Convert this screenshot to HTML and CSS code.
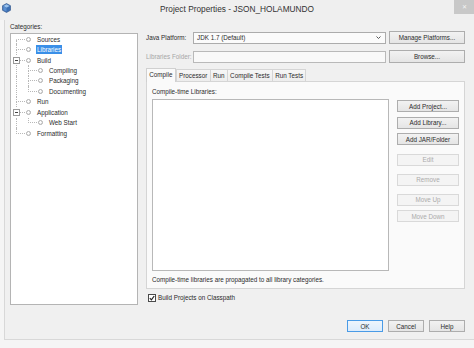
FILE: index.html
```html
<!DOCTYPE html>
<html lang="en">
<head>
    <meta charset="UTF-8">
    <meta name="viewport" content="width=device-width, initial-scale=1.0">
    <title>Project Properties</title>
    <link rel="stylesheet" href="styles.css">
</head>
<body>
<div class="window">
    <header class="titlebar">
        <svg class="app-icon" width="9" height="10" viewBox="0 0 9 10">
            <path d="M4.5 0.5 L8.5 2.7 L8.5 7.3 L4.5 9.5 L0.5 7.3 L0.5 2.7 Z" fill="#3c6fb3" stroke="#2a4f86" stroke-width="0.6"/>
            <path d="M4.5 1.3 L7.6 3 L4.5 4.8 L1.4 3 Z" fill="#9cc3ec"/>
            <path d="M4.5 4.8 L4.5 8.6 L1.4 6.9 L1.4 3 Z" fill="#5b8fd0"/>
        </svg>
        <span class="title">Project Properties - JSON_HOLAMUNDO</span>
        <span class="close">&#x2715;</span>
    </header>

    <div class="client">
        <div class="main">
            <aside class="categories">
                <div class="caption">Categories:</div>
                <div class="tree">
                    <div class="node">
                        <span class="twig first"><i></i><i></i></span>
                        <span class="dot"></span>
                        <span class="name">Sources</span>
                    </div>
                    <div class="node">
                        <span class="twig"><i></i><i></i></span>
                        <span class="dot"></span>
                        <span class="name selected">Libraries</span>
                    </div>
                    <div class="node">
                        <span class="toggle"></span><span class="stub"></span>
                        <span class="dot"></span>
                        <span class="name">Build</span>
                    </div>
                    <div class="node">
                        <span class="pass"></span>
                        <span class="twig"><i></i><i></i></span>
                        <span class="dot"></span>
                        <span class="name">Compiling</span>
                    </div>
                    <div class="node">
                        <span class="pass"></span>
                        <span class="twig"><i></i><i></i></span>
                        <span class="dot"></span>
                        <span class="name">Packaging</span>
                    </div>
                    <div class="node">
                        <span class="pass"></span>
                        <span class="twig last"><i></i><i></i></span>
                        <span class="dot"></span>
                        <span class="name">Documenting</span>
                    </div>
                    <div class="node">
                        <span class="twig"><i></i><i></i></span>
                        <span class="dot"></span>
                        <span class="name">Run</span>
                    </div>
                    <div class="node">
                        <span class="toggle"></span><span class="stub"></span>
                        <span class="dot"></span>
                        <span class="name">Application</span>
                    </div>
                    <div class="node">
                        <span class="pass"></span>
                        <span class="twig last"><i></i><i></i></span>
                        <span class="dot"></span>
                        <span class="name">Web Start</span>
                    </div>
                    <div class="node">
                        <span class="twig last"><i></i><i></i></span>
                        <span class="dot"></span>
                        <span class="name">Formatting</span>
                    </div>
                </div>
            </aside>

            <section class="settings">
                <div class="field-row">
                    <span class="field-label">Java Platform:</span>
                    <div class="combo">
                        <span>JDK 1.7 (Default)</span>
                        <svg width="5" height="3" viewBox="0 0 5 3"><path d="M0.5 0.5 L2.5 2.5 L4.5 0.5" fill="none" stroke="#444" stroke-width="0.9"/></svg>
                    </div>
                    <button class="btn wide">Manage Platforms...</button>
                </div>
                <div class="field-row">
                    <span class="field-label off">Libraries Folder:</span>
                    <div class="textbox"></div>
                    <button class="btn wide">Browse...</button>
                </div>

                <div class="tabs">
                    <span class="tab active">Compile</span>
                    <span class="tab">Processor</span>
                    <span class="tab">Run</span>
                    <span class="tab">Compile Tests</span>
                    <span class="tab">Run Tests</span>
                </div>
                <div class="tab-panel">
                    <div class="panel-label">Compile-time Libraries:</div>
                    <div class="list-area">
                        <div class="listbox"></div>
                        <div class="side-buttons">
                            <button class="btn">Add Project...</button>
                            <button class="btn">Add Library...</button>
                            <button class="btn">Add JAR/Folder</button>
                            <button class="btn gap first-off" disabled>Edit</button>
                            <button class="btn gap" disabled>Remove</button>
                            <button class="btn" disabled>Move Up</button>
                            <button class="btn" disabled>Move Down</button>
                        </div>
                    </div>
                    <div class="note">Compile-time libraries are propagated to all library categories.</div>
                </div>

                <label class="check">
                    <span class="box">
                        <svg width="6" height="6" viewBox="0 0 6 6"><path d="M0.8 3.2 L2.4 4.8 L5.2 1" fill="none" stroke="#222" stroke-width="1.2"/></svg>
                    </span>
                    Build Projects on Classpath
                </label>
            </section>
        </div>

        <footer class="actions">
            <button class="btn small default">OK</button>
            <button class="btn small">Cancel</button>
            <button class="btn small">Help</button>
        </footer>
    </div>
</div>
</body>
</html>
```

FILE: styles.css
```css
* {
    box-sizing: border-box;
}
body {
    margin: 0;
    width: 474px;
    height: 348px;
    overflow: hidden;
    background-color: #f5f5f5; /* window frame */
    font-family: "Liberation Sans", Arial, sans-serif;
    font-size: 6.3px;
    color: #2b2b2b;
}
.window {
    display: flex;
    flex-direction: column;
    height: 348px;
}

/* title bar */
.titlebar {
    height: 20px;
    display: grid;
    grid-template-columns: 20px 1fr 20px;
    align-items: start;
    background-color: #efefef;
}
.app-icon {
    margin: 3px 0 0 2px;
}
.title {
    text-align: center;
    font-size: 8.3px;
    line-height: 18px;
    color: #333;
}
.close {
    height: 14px;
    background-color: #c8c8c8;
    color: #f4f4f4;
    font-size: 6px;
    line-height: 14px;
    text-align: center;
}

/* client area */
.client {
    margin-left: 4px;
    border-left: 1px solid #d8d8d8;
    border-bottom: 1px solid #d8d8d8;
    background-color: #f0f0f0;
    height: 320px;
    display: flex;
    flex-direction: column;
}
.main {
    display: flex;
    gap: 8px;
    height: 285px;
    padding: 2px 9px 0 5px;
}

/* categories tree */
.categories {
    width: 128px;
    display: flex;
    flex-direction: column;
}
.caption {
    line-height: 10px;
    margin-bottom: 1px;
}
.tree {
    height: 272px;
    background-color: #fff;
    border: 1px solid #b4b4b4;
}
.node {
    display: flex;
    align-items: center;
    height: 10.45px;
}
.twig {
    display: flex;
    flex-direction: column;
    align-self: stretch;
    width: 9px;
    margin-left: 5px;
}
.twig i {
    flex: 1;
    border-left: 1px dotted #b8b8b8;
}
.twig i:first-child {
    border-bottom: 1px dotted #b8b8b8;
}
.twig.first i:first-child,
.twig.last i:last-child {
    border-left-color: transparent;
}
.pass {
    align-self: stretch;
    width: 7px;
    margin-left: 5px;
    border-left: 1px dotted #b8b8b8;
}
.toggle {
    width: 7px;
    height: 7px;
    margin-left: 2px;
    border: 1px solid #9a9a9a;
    background-color: #fff;
    display: flex;
    align-items: center;
    justify-content: center;
}
.toggle::before {
    content: "";
    width: 3px;
    height: 1px;
    background-color: #444;
}
.stub {
    width: 5px;
    border-top: 1px dotted #b8b8b8;
}
.dot {
    width: 5px;
    height: 5px;
    margin-left: 1px;
    border-radius: 50%;
    border: 1px solid #adadad;
    background: radial-gradient(circle at 40% 40%, #fff 30%, #dadada 100%);
}
.name {
    margin-left: 6px;
    line-height: 9px;
    white-space: nowrap;
}
.name.selected {
    margin-left: 5px;
    padding: 0 1px;
    background-color: #3a8fe8;
    color: #fff;
}

/* settings column */
.settings {
    flex: 1;
    display: flex;
    flex-direction: column;
    padding-top: 9px;
}
.field-row {
    display: flex;
    align-items: center;
    height: 13px;
    margin-bottom: 6px;
}
.field-label {
    width: 47px;
    white-space: nowrap;
}
.field-label.off {
    color: #a6a6a6;
}
.combo, .textbox {
    width: 193px;
    height: 12px;
    margin-right: 3px;
    border: 1px solid #b9b9b9;
    background-color: #f9f9f9;
}
.combo {
    display: flex;
    align-items: center;
    justify-content: space-between;
    padding: 0 4px 0 3px;
    background-color: #fbfbfb;
    border-color: #acacac;
}
.btn {
    font-family: inherit;
    font-size: 6.3px;
    color: #2b2b2b;
    height: 12px;
    padding: 0;
    border: 1px solid #adadad;
    background: linear-gradient(#f2f2f2, #e5e5e5);
    white-space: nowrap;
}
.btn:disabled {
    color: #ababab;
    border-color: #d9d9d9;
    background: #f4f4f4;
}
.btn.wide {
    width: 76px;
    height: 13px;
}

/* tabs */
.tabs {
    display: flex;
    align-items: flex-end;
    height: 13px;
    margin-top: -1px;
    position: relative;
    z-index: 1;
}
.tab {
    height: 12px;
    line-height: 11px;
    padding: 0 2.3px;
    margin-left: -1px;
    border: 1px solid #d5d5d5;
    border-bottom: none;
    background: linear-gradient(#f6f6f6, #ededed);
    white-space: nowrap;
}
.tab.active {
    height: 14px;
    margin-left: 0;
    margin-right: 1px;
    margin-bottom: -1px;
    line-height: 12px;
    background: #fafafa;
    border-color: #d0d0d0;
}
.tab-panel {
    width: 319px;
    height: 208px;
    border: 1px solid #d5d5d5;
    background-color: #fafafa;
    padding: 5px 5px 0 5px;
    display: flex;
    flex-direction: column;
}
.panel-label {
    line-height: 9px;
    margin-bottom: 3px;
}
.list-area {
    display: flex;
    gap: 8px;
}
.listbox {
    width: 237px;
    height: 172px;
    border: 1px solid #b8b8b8;
    background-color: #fff;
}
.side-buttons {
    display: flex;
    flex-direction: column;
    gap: 4.5px;
    padding-top: 1px;
}
.side-buttons .btn {
    width: 62px;
}
.side-buttons .btn.gap {
    margin-bottom: 3.5px;
}
.side-buttons .btn.first-off {
    margin-top: 4px;
}
.note {
    margin-top: 4px;
    line-height: 10px;
}

/* checkbox */
.check {
    display: flex;
    align-items: center;
    margin-top: 4px;
    padding-left: 2px;
    line-height: 9px;
}
.check .box {
    width: 8px;
    height: 8px;
    margin-right: 2px;
    border: 1px solid #4a4a4a;
    background-color: #fff;
    display: flex;
    align-items: center;
    justify-content: center;
}

/* dialog buttons */
.actions {
    display: flex;
    justify-content: flex-end;
    gap: 5px;
    padding: 15px 9px 0 0;
}
.btn.small {
    width: 36px;
}
.btn.default {
    border-color: #4a9be6;
    background: linear-gradient(#eef5fc, #dcecfc);
}
```
